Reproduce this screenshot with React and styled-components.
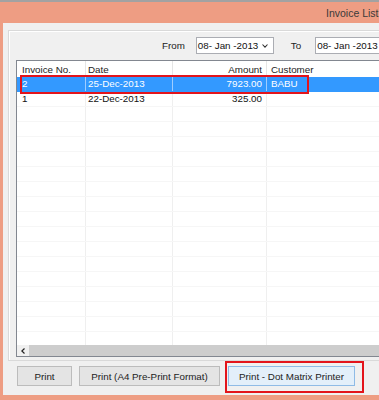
import React from "react";
import styled, { createGlobalStyle } from "styled-components";

const GlobalStyle = createGlobalStyle`
  html, body { margin: 0; padding: 0; }
  body {
    background: #ee9d83;
    overflow: hidden;
    font-family: "Liberation Sans", Arial, sans-serif;
  }
`;

const Frame = styled.div`
  width: 379px;
  height: 400px;
  box-sizing: border-box;
  border-top: 2px solid #a2a2a2;
  display: flex;
  flex-direction: column;
  overflow: hidden;
`;

const TitleBar = styled.div`
  height: 21px;
  flex: none;
  display: flex;
  align-items: center;
  padding-left: 326px;
  font-size: 10.5px;
  color: #3a3a3a;
  white-space: nowrap;
`;

const Client = styled.div`
  margin-left: 3px;
  width: 470px;
  height: 372px;
  flex: none;
  box-sizing: border-box;
  background: #f0f0f0;
  padding: 7px 0 0 5px;
  display: flex;
  flex-direction: column;
`;

const Panel = styled.div`
  height: 331px;
  box-sizing: border-box;
  border: 1px solid #d9d9d9;
  box-shadow: inset 1px 1px 0 #ffffff;
  padding: 6px 0 0 7px;
  display: flex;
  flex-direction: column;
`;

const FilterRow = styled.div`
  height: 17px;
  display: flex;
  align-items: center;
  padding-left: 146px;
  font-size: 9.8px;
  color: #222;
`;

const Label = styled.span`
  margin-right: ${(p) => p.$gap}px;
`;

const Combo = styled.div`
  width: ${(p) => p.$w}px;
  height: 17px;
  box-sizing: border-box;
  border: 1px solid #abadb3;
  background: #fff;
  display: flex;
  align-items: center;
  padding-left: 1px;
  margin-right: ${(p) => p.$gap || 0}px;
  white-space: nowrap;
  flex: none;
  font-size: 9.8px;
  color: #111;
`;

const ComboText = styled.span`
  flex: 1;
`;

const Chevron = styled.svg`
  width: 6px;
  height: 4px;
  margin-right: 5px;
`;

const List = styled.div`
  position: relative;
  margin-top: 6px;
  height: 297px;
  box-sizing: border-box;
  border: 1px solid #828790;
  background: #fff;
  display: flex;
  flex-direction: column;
  font-size: 9.8px;
  color: #111;
`;

const cols = "69px 87px 94px 200px";

const HeaderRow = styled.div`
  height: 16px;
  flex: none;
  display: grid;
  grid-template-columns: ${cols};
  overflow: hidden;
`;

const HeaderCell = styled.div`
  box-sizing: border-box;
  border-right: 1px solid #e5e5e5;
  padding-top: 3px;
  padding-left: ${(p) => p.$pl || 0}px;
  padding-right: ${(p) => (p.$right ? 4 : 0)}px;
  text-align: ${(p) => (p.$right ? "right" : "left")};
  line-height: 12px;
  color: #222;
  white-space: nowrap;
`;

const Body = styled.div`
  flex: 1;
  overflow: hidden;
  display: flex;
  flex-direction: column;
`;

const Row = styled.div`
  height: 15px;
  flex: none;
  display: grid;
  grid-template-columns: ${cols};
  background: ${(p) => (p.$selected ? "#3399ff" : "#fff")};
  color: ${(p) => (p.$selected ? "#fff" : "#111")};
  border-bottom: 1px solid ${(p) => (p.$selected ? "#3399ff" : "#f6f6f6")};
  box-sizing: border-box;
`;

const Cell = styled.div`
  box-sizing: border-box;
  border-right: 1px solid ${(p) => (p.$selected ? "#9fcdff" : "#efefef")};
  padding-left: ${(p) => p.$pl || 0}px;
  padding-right: ${(p) => (p.$right ? 4 : 0)}px;
  text-align: ${(p) => (p.$right ? "right" : "left")};
  line-height: 14px;
  white-space: nowrap;
`;

const HScroll = styled.div`
  height: 11px;
  flex: none;
  display: flex;
  background: #e8e8e8;
`;

const ScrollArrow = styled.div`
  width: 12px;
  display: flex;
  align-items: center;
  justify-content: center;
  background: #f0f0f0;
`;

const ScrollThumb = styled.div`
  flex: 1;
  background: #cdcdcd;
`;

const RowMark = styled.div`
  position: absolute;
  left: 3px;
  top: 14px;
  width: 289px;
  height: 19px;
  box-sizing: border-box;
  border: 2px solid #e3141b;
  pointer-events: none;
`;

const ButtonRow = styled.div`
  margin-top: 5px;
  padding-left: 9px;
  display: flex;
  gap: 7px;
`;

const Button = styled.button`
  height: 20px;
  width: ${(p) => p.$w}px;
  box-sizing: border-box;
  padding: 0;
  font-family: "Liberation Sans", Arial, sans-serif;
  font-size: 9.8px;
  color: #222;
  border: 1px solid ${(p) => (p.$focus ? "#8fbbe6" : "#bcbcbc")};
  background: ${(p) => (p.$focus ? "#e3effa" : "#e4e4e4")};
  white-space: nowrap;
`;

const Marked = styled.span`
  position: relative;
  display: inline-flex;
  margin-left: 1px;
  &::after {
    content: "";
    position: absolute;
    top: -5px;
    left: -3px;
    right: -9px;
    bottom: -7px;
    border: 2px solid #e3141b;
  }
`;

const rows = [
  { no: "2", date: "25-Dec-2013", amount: "7923.00", customer: "BABU", selected: true },
  { no: "1", date: "22-Dec-2013", amount: "325.00", customer: "" },
];

export default function App() {
  const fillers = Array.from({ length: 17 });
  return (
    <>
      <GlobalStyle />
      <Frame>
        <TitleBar>Invoice List</TitleBar>
        <Client>
          <Panel>
            <FilterRow>
              <Label $gap={11}>From</Label>
              <Combo $w={78} $gap={17}>
                <ComboText>08- Jan -2013</ComboText>
                <Chevron viewBox="0 0 6 4">
                  <path d="M0.5 0.5 L3 3.2 L5.5 0.5" fill="none" stroke="#333" strokeWidth="1.1" />
                </Chevron>
              </Combo>
              <Label $gap={14}>To</Label>
              <Combo $w={90}>
                <ComboText>08- Jan -2013</ComboText>
              </Combo>
            </FilterRow>
            <List>
              <HeaderRow>
                <HeaderCell $pl={5}>Invoice No.</HeaderCell>
                <HeaderCell $pl={2}>Date</HeaderCell>
                <HeaderCell $right>Amount</HeaderCell>
                <HeaderCell $pl={4}>Customer</HeaderCell>
              </HeaderRow>
              <Body>
                {rows.map((r) => (
                  <Row key={r.no} $selected={r.selected}>
                    <Cell $pl={5} $selected={r.selected}>{r.no}</Cell>
                    <Cell $pl={2} $selected={r.selected}>{r.date}</Cell>
                    <Cell $right $selected={r.selected}>{r.amount}</Cell>
                    <Cell $pl={4} $selected={r.selected}>{r.customer}</Cell>
                  </Row>
                ))}
                {fillers.map((_, i) => (
                  <Row key={"f" + i}>
                    <Cell />
                    <Cell />
                    <Cell />
                    <Cell />
                  </Row>
                ))}
              </Body>
              <HScroll>
                <ScrollArrow>
                  <svg width="4" height="6" viewBox="0 0 4 6">
                    <path d="M3.5 0.5 L0.8 3 L3.5 5.5" fill="none" stroke="#222" strokeWidth="1.2" />
                  </svg>
                </ScrollArrow>
                <ScrollThumb />
              </HScroll>
              <RowMark />
            </List>
          </Panel>
          <ButtonRow>
            <Button $w={55}>Print</Button>
            <Button $w={141}>Print (A4 Pre-Print Format)</Button>
            <Marked>
              <Button $w={127} $focus>Print - Dot Matrix Printer</Button>
            </Marked>
          </ButtonRow>
        </Client>
      </Frame>
    </>
  );
}
